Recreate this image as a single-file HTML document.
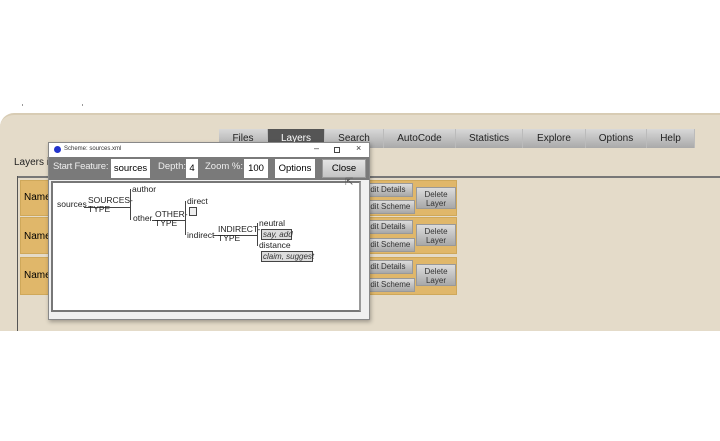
<!DOCTYPE html>
<html><head><style>
*{margin:0;padding:0;box-sizing:border-box}
body{width:720px;height:441px;background:#fff;position:relative;overflow:hidden;font-family:"Liberation Sans",sans-serif}
.a{position:absolute}
.panel{left:0;top:113px;width:720px;height:218px;background:#e4dbc9;border-top:2px solid #d8ccb4;border-radius:14px 0 0 0}
.tab{position:absolute;top:129px;height:19px;background:linear-gradient(#d8d8d8,#a9a9a9);color:#222;font-size:10px;text-align:center;line-height:19px;border-right:1px solid #bbb}
.row{position:absolute;left:20px;width:437px;background:#e0b76a;border:1px solid #cfa85a}
.btn{position:absolute;background:linear-gradient(#dcdcdc,#a8a8a8);font-size:8px;color:#333;text-align:center;border:1px solid #999;white-space:nowrap;overflow:hidden}
.eb{text-align:left;padding-left:24px}
.t{position:absolute;font-size:8.5px;color:#222;white-space:nowrap;line-height:9px}
.l{position:absolute;background:#444}
.bx{position:absolute;border:1px solid #444;background:#ddd;font-size:8px;font-style:italic;color:#333;line-height:9px;padding-left:1px;white-space:nowrap}
.tb{position:absolute;top:18px;font-size:9.5px;color:#eee;white-space:nowrap}
.fld{position:absolute;top:16px;height:19px;background:#fff;font-size:9.5px;line-height:19px;text-align:center}
</style></head><body>
<div class="a" style="left:22px;top:104px;width:1px;height:2px;background:#999"></div>
<div class="a" style="left:82px;top:104px;width:1px;height:2px;background:#999"></div>
<div class="a panel"></div>
<div class="tab" style="left:219px;width:49px">Files</div>
<div class="tab" style="left:268px;width:57px;background:#555;color:#fff">Layers</div>
<div class="tab" style="left:325px;width:59px">Search</div>
<div class="tab" style="left:384px;width:72px">AutoCode</div>
<div class="tab" style="left:456px;width:67px">Statistics</div>
<div class="tab" style="left:523px;width:63px">Explore</div>
<div class="tab" style="left:586px;width:61px">Options</div>
<div class="tab" style="left:647px;width:48px">Help</div>
<div class="a" style="left:14px;top:157px;font-size:10px;color:#222">Layers in</div>
<div class="a" style="left:17px;top:176px;width:703px;height:2px;background:#777"></div>
<div class="a" style="left:17px;top:176px;width:1px;height:155px;background:#555"></div>
<div class="row" style="top:180px;height:36px"></div>
<div class="row" style="top:217px;height:37px"></div>
<div class="row" style="top:257px;height:38px"></div>
<div class="a" style="left:24px;top:192px;font-size:10px">Name:</div>
<div class="a" style="left:24px;top:231px;font-size:10px">Name:</div>
<div class="a" style="left:24px;top:270px;font-size:10px">Name:</div>
<div class="btn eb" style="left:340px;top:183px;width:73px;height:14px;line-height:12px">Edit Details</div>
<div class="btn eb" style="left:340px;top:200px;width:75px;height:14px;line-height:12px">Edit  Scheme</div>
<div class="btn" style="left:416px;top:187px;width:40px;height:22px;line-height:9px;padding-top:2px">Delete<br>Layer</div>
<div class="btn eb" style="left:340px;top:220px;width:73px;height:14px;line-height:12px">Edit Details</div>
<div class="btn eb" style="left:340px;top:238px;width:75px;height:14px;line-height:12px">Edit  Scheme</div>
<div class="btn" style="left:416px;top:224px;width:40px;height:22px;line-height:9px;padding-top:2px">Delete<br>Layer</div>
<div class="btn eb" style="left:340px;top:260px;width:73px;height:14px;line-height:12px">Edit Details</div>
<div class="btn eb" style="left:340px;top:278px;width:75px;height:14px;line-height:12px">Edit  Scheme</div>
<div class="btn" style="left:416px;top:264px;width:40px;height:22px;line-height:9px;padding-top:2px">Delete<br>Layer</div>

<div class="a" style="left:48px;top:142px;width:322px;height:178px;background:#f0f0f0;border:1px solid #888;box-shadow:1px 2px 4px rgba(0,0,0,.3)">
 <div class="a" style="left:0;top:0;width:320px;height:14px;background:#fff"></div>
 <div class="a" style="left:5px;top:3px;width:7px;height:7px;border-radius:50%;background:#2233cc"></div>
 <div class="a" style="left:15px;top:3px;font-size:6px;color:#333">Scheme: sources.xml</div>
 <div class="a" style="left:265px;top:0;font-size:9px;color:#333">–</div>
 <div class="a" style="left:285px;top:4px;width:6px;height:6px;border:1px solid #444"></div>
 <div class="a" style="left:307px;top:0;font-size:9px;color:#333">×</div>
 <div class="a" style="left:0;top:14px;width:320px;height:23px;background:#7a7a7a"></div>
 <div class="tb" style="left:4px;letter-spacing:-0.2px">Start Feature:</div>
 <div class="fld" style="left:62px;width:39px">sources</div>
 <div class="tb" style="left:109px">Depth:</div>
 <div class="fld" style="left:137px;width:12px">4</div>
 <div class="tb" style="left:156px">Zoom %:</div>
 <div class="fld" style="left:195px;width:24px">100</div>
 <div class="fld" style="left:226px;width:40px">Options</div>
 <div class="a" style="left:273px;top:16px;width:44px;height:19px;background:linear-gradient(#e4e4e4,#c4c4c4);border:1px solid #999;font-size:9.5px;line-height:17px;text-align:center">Close</div>
 <div class="a" style="left:2px;top:38px;width:310px;height:131px;background:#fff;border:2px solid #777;border-right-color:#999"></div>
 <div class="a" style="left:312px;top:38px;width:8px;height:131px;background:#f0f0f0"></div>
</div>
<!-- tree -->
<div class="t" style="left:57px;top:200px">sources</div>
<div class="l" style="left:84px;top:207px;width:46px;height:1px"></div>
<div class="t" style="left:88px;top:196px">SOURCES-</div>
<div class="t" style="left:88px;top:205px">TYPE</div>
<div class="l" style="left:130px;top:189px;width:1px;height:31px"></div>
<div class="t" style="left:132px;top:185px">author</div>
<div class="t" style="left:133px;top:214px">other</div>
<div class="l" style="left:152px;top:220px;width:33px;height:1px"></div>
<div class="t" style="left:155px;top:210px">OTHER-</div>
<div class="t" style="left:155px;top:219px">TYPE</div>
<div class="l" style="left:185px;top:201px;width:1px;height:34px"></div>
<div class="t" style="left:187px;top:197px">direct</div>
<div class="bx" style="left:189px;top:207px;width:8px;height:9px;background:#eee"></div>
<div class="t" style="left:187px;top:231px">indirect</div>
<div class="l" style="left:213px;top:235px;width:44px;height:1px"></div>
<div class="t" style="left:218px;top:225px">INDIRECT-</div>
<div class="t" style="left:218px;top:234px">TYPE</div>
<div class="l" style="left:257px;top:223px;width:1px;height:23px"></div>
<div class="t" style="left:259px;top:219px">neutral</div>
<div class="bx" style="left:261px;top:229px;width:31px;height:11px">say, add</div>
<div class="t" style="left:259px;top:241px">distance</div>
<div class="bx" style="left:261px;top:251px;width:52px;height:11px">claim, suggest</div>
<div class="a" style="left:345px;top:177px;font-size:10px;color:#555">⇱</div>
</body></html>
